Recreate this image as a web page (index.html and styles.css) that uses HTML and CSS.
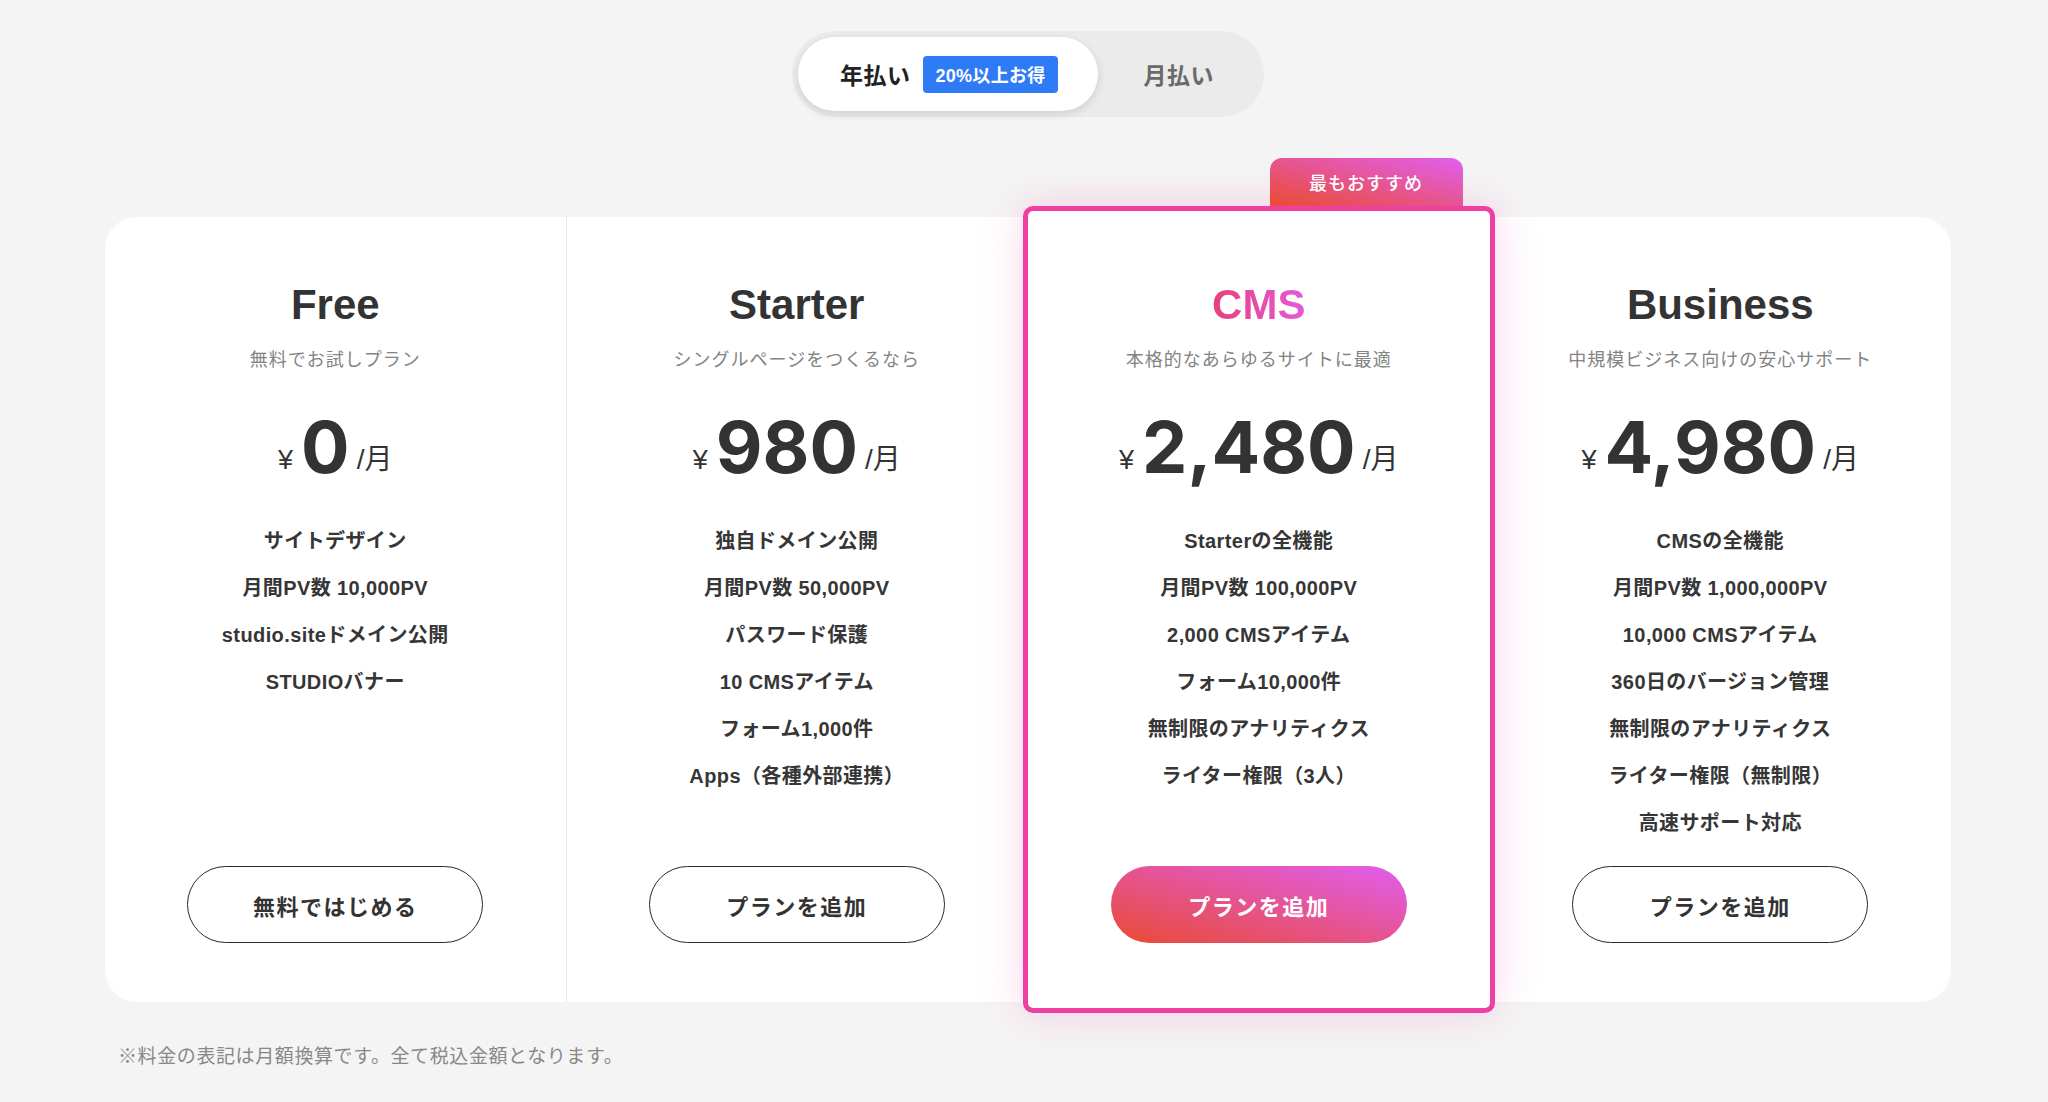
FILE: index.html
```html
<!DOCTYPE html>
<html lang="ja">
<head>
<meta charset="utf-8">
<title>料金プラン</title>
<link rel="stylesheet" href="styles.css">
</head>
<body>
<main class="page">
  <div class="toggle-wrap">
    <div class="toggle">
      <div class="toggle-opt active"><span>年払い</span><span class="save">20%以上お得</span></div>
      <div class="toggle-opt">月払い</div>
    </div>
  </div>

  <section class="plans">
    <div class="plan">
      <h2 class="plan-name">Free</h2>
      <p class="plan-desc">無料でお試しプラン</p>
      <div class="price"><span class="yen">¥</span><span class="amount">0</span><span class="unit">/月</span></div>
      <ul class="features">
        <li>サイトデザイン</li>
        <li>月間PV数 10,000PV</li>
        <li>studio.siteドメイン公開</li>
        <li>STUDIOバナー</li>
      </ul>
      <a class="btn">無料ではじめる</a>
    </div>

    <div class="plan">
      <h2 class="plan-name">Starter</h2>
      <p class="plan-desc">シングルページをつくるなら</p>
      <div class="price"><span class="yen">¥</span><span class="amount">980</span><span class="unit">/月</span></div>
      <ul class="features">
        <li>独自ドメイン公開</li>
        <li>月間PV数 50,000PV</li>
        <li>パスワード保護</li>
        <li>10 CMSアイテム</li>
        <li>フォーム1,000件</li>
        <li>Apps（各種外部連携）</li>
      </ul>
      <a class="btn">プランを追加</a>
    </div>

    <div class="plan featured">
      <div class="ribbon">最もおすすめ</div>
      <h2 class="plan-name grad-text">CMS</h2>
      <p class="plan-desc">本格的なあらゆるサイトに最適</p>
      <div class="price"><span class="yen">¥</span><span class="amount">2,480</span><span class="unit">/月</span></div>
      <ul class="features">
        <li>Starterの全機能</li>
        <li>月間PV数 100,000PV</li>
        <li>2,000 CMSアイテム</li>
        <li>フォーム10,000件</li>
        <li>無制限のアナリティクス</li>
        <li>ライター権限（3人）</li>
      </ul>
      <a class="btn btn-grad">プランを追加</a>
    </div>

    <div class="plan">
      <h2 class="plan-name">Business</h2>
      <p class="plan-desc">中規模ビジネス向けの安心サポート</p>
      <div class="price"><span class="yen">¥</span><span class="amount">4,980</span><span class="unit">/月</span></div>
      <ul class="features">
        <li>CMSの全機能</li>
        <li>月間PV数 1,000,000PV</li>
        <li>10,000 CMSアイテム</li>
        <li>360日のバージョン管理</li>
        <li>無制限のアナリティクス</li>
        <li>ライター権限（無制限）</li>
        <li>高速サポート対応</li>
      </ul>
      <a class="btn">プランを追加</a>
    </div>
  </section>

  <p class="note">※料金の表記は月額換算です。全て税込金額となります。</p>
</main>
</body>
</html>
```

FILE: styles.css
```css
* { box-sizing: border-box; }

html, body {
  margin: 0;
  padding: 0;
}

body {
  background: #f4f4f4;
  color: #333;
  font-family: "Liberation Sans", "Noto Sans CJK JP", sans-serif;
}

.page {
  padding: 31px 97px 0 105px;
}

/* toggle */
.toggle-wrap {
  display: flex;
  justify-content: center;
}

.toggle {
  display: flex;
  align-items: center;
  height: 86px;
  padding: 6px;
  border-radius: 43px;
  background: #ebebeb;
}

.toggle-opt {
  display: flex;
  align-items: center;
  height: 74px;
  font-size: 23px;
  font-weight: 700;
  color: #6a6a6a;
  letter-spacing: 0.5px;
  padding: 0 44px 0 46px;
}

.toggle-opt.active {
  background: #fff;
  color: #222;
  border-radius: 37px;
  box-shadow: 0 3px 10px rgba(0, 0, 0, 0.12);
  padding: 0 40px 0 42px;
  gap: 13px;
}

.save {
  display: inline-flex;
  align-items: center;
  height: 37px;
  padding: 0 12px;
  border-radius: 4px;
  background: #2f7bf6;
  color: #fff;
  font-size: 18px;
  letter-spacing: 0.3px;
}

/* plans */
.plans {
  display: grid;
  grid-template-columns: repeat(4, 1fr);
  margin-top: 100px;
  background: #fff;
  border-radius: 32px;
}

.plan {
  display: flex;
  flex-direction: column;
  align-items: center;
  padding: 63px 0 59px;
  border-right: 1px solid #e8e8e8;
}

.plan:last-child { border-right: none; }

.plan-name {
  margin: 0;
  font-size: 42px;
  line-height: 50px;
  font-weight: 700;
  color: #333;
}

.plan-desc {
  margin: 17px 0 0;
  font-size: 18px;
  line-height: 26px;
  color: #838383;
  letter-spacing: 1px;
}

.price {
  margin-top: 38px;
  height: 72px;
  line-height: 72px;
  text-align: center;
  white-space: nowrap;
}

.yen {
  font-size: 27px;
  color: #333;
  vertical-align: 4px;
  margin-right: 8px;
}

.amount {
  font-family: "Inter", "Liberation Sans", sans-serif;
  font-size: 72px;
  font-weight: 700;
  color: #333;
}

.unit {
  font-size: 28px;
  color: #333;
  vertical-align: 4px;
  margin-left: 7px;
}

.features {
  list-style: none;
  margin: 35px 0 19px;
  padding: 0;
  text-align: center;
}

.features li {
  font-size: 20px;
  line-height: 47px;
  font-weight: 700;
  color: #363636;
  letter-spacing: 0.4px;
}

.btn {
  margin-top: auto;
  display: flex;
  align-items: center;
  justify-content: center;
  width: 296px;
  height: 77px;
  border: 1.5px solid #2a2a2a;
  border-radius: 39px;
  font-size: 22px;
  font-weight: 700;
  letter-spacing: 1.5px;
  color: #333;
}

/* featured */
.featured {
  position: relative;
  z-index: 1;
  border-right: none;
}

.featured::before {
  content: "";
  position: absolute;
  top: -11px;
  bottom: -11px;
  left: -5px;
  right: -5px;
  z-index: -1;
  background: #fff;
  border: 5px solid #ee3fa2;
  border-radius: 10px;
  box-shadow: 0 0 44px rgba(238, 63, 162, 0.22);
}

.ribbon {
  position: absolute;
  top: -59px;
  right: 27px;
  width: 193px;
  height: 48px;
  display: flex;
  align-items: center;
  justify-content: center;
  border-radius: 12px 12px 0 0;
  background: linear-gradient(to top right, #eb4b30, #e15ff0);
  color: #fff;
  font-size: 18px;
  font-weight: 500;
  letter-spacing: 1px;
}

.grad-text {
  background: linear-gradient(90deg, #e8407c, #e45ad9);
  -webkit-background-clip: text;
  background-clip: text;
  color: transparent;
}

.btn-grad {
  border: none;
  background: linear-gradient(to top right, #ea4a33, #e05ef0);
  color: #fff;
}

.note {
  margin: 42px 0 0 13px;
  font-size: 19px;
  line-height: 26px;
  color: #888;
  letter-spacing: 0.6px;
}
```
